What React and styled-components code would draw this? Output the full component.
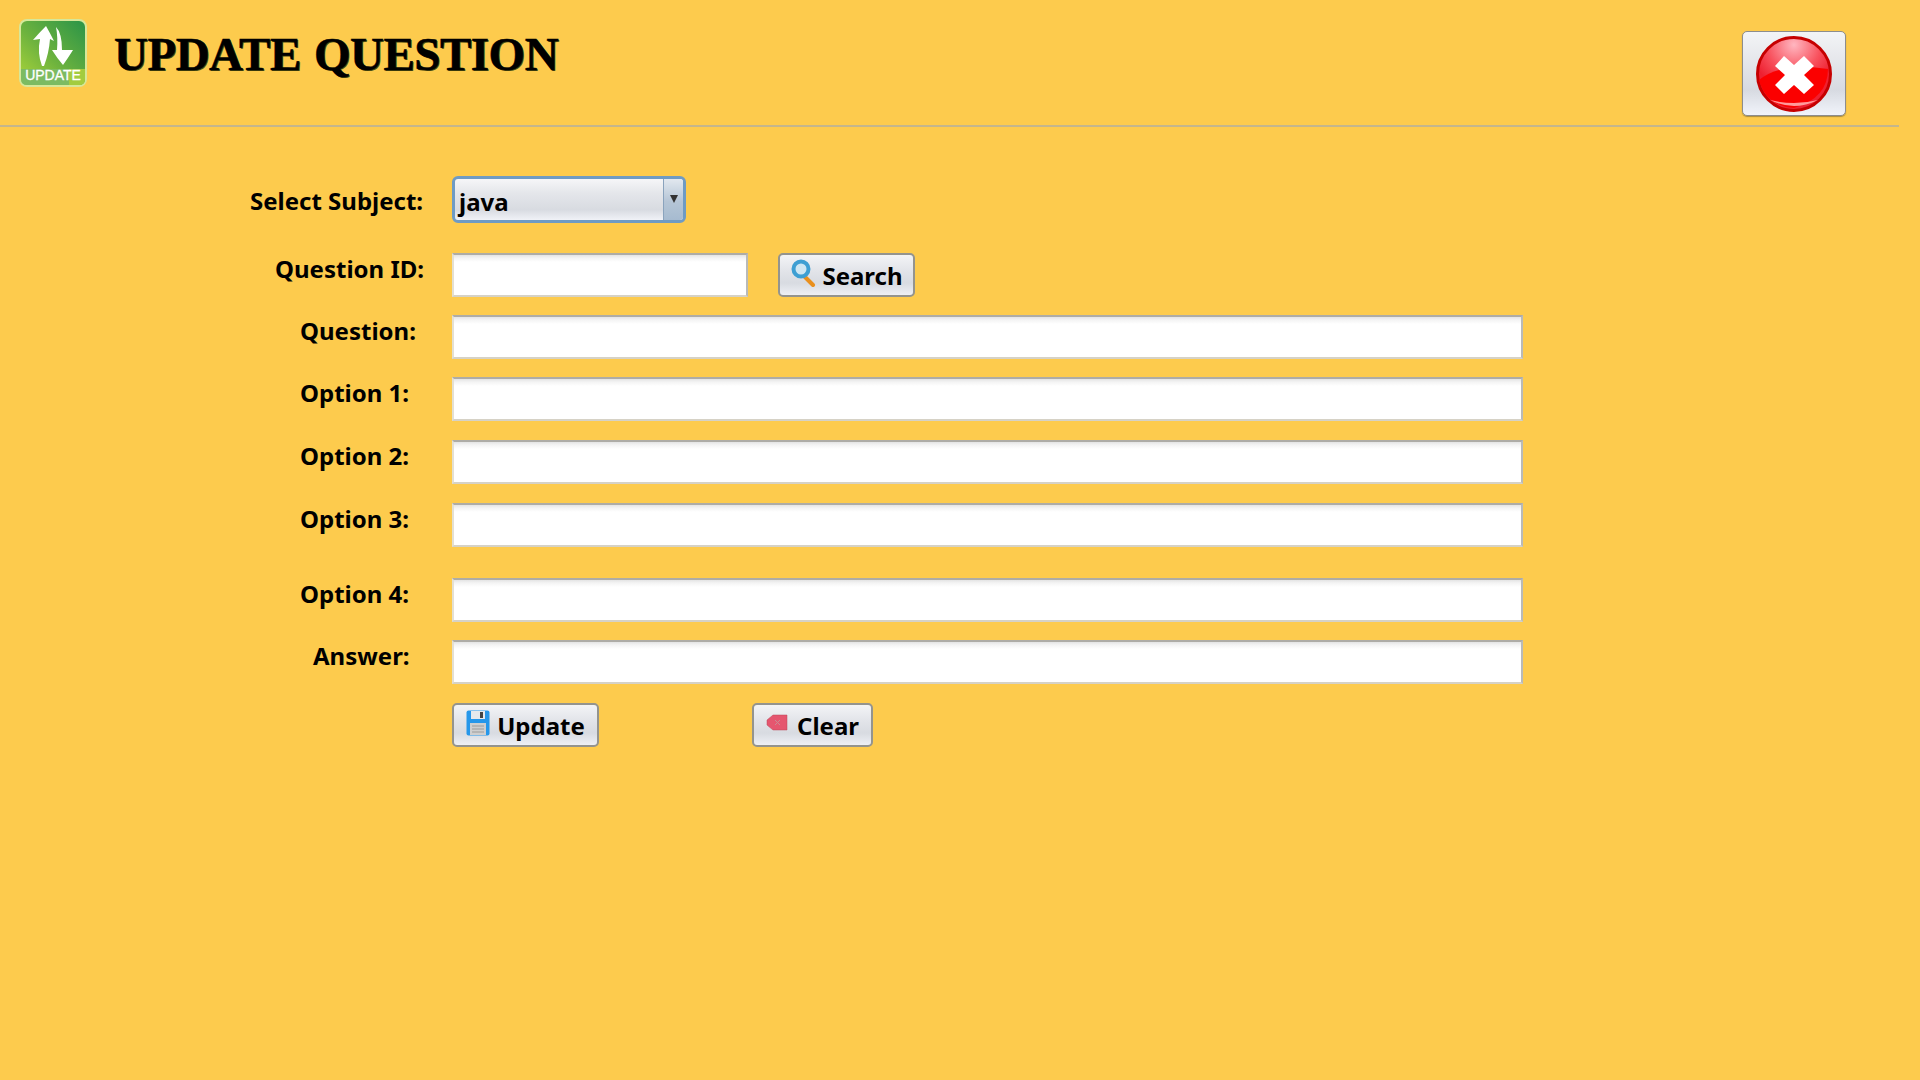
import React from 'react'
import styled, { createGlobalStyle } from 'styled-components'

const GlobalStyle = createGlobalStyle`
  html, body {
    margin: 0;
    height: 100%;
    background: #fdcb4d;
    overflow: hidden;
  }
  * {
    box-sizing: border-box;
  }
`

const Page = styled.div`
  width: 1920px;
  height: 1080px;
  color: #000;
  font-family: "Noto Sans", "Open Sans", sans-serif;
`
const Header = styled.header`
  width: 1899px;
  height: 127px;
  padding: 19px 53px 0 19px;
  display: flex;
  align-items: flex-start;
  border-bottom: 2px solid #c4b68c;
`
const Logo = styled.svg`
  width: 68px;
  height: 68px;
  flex: none;
`
const Title = styled.h1`
  margin: 11px 0 0 27px;
  flex: 1;
  font-family: "Liberation Serif", serif;
  font-size: 47px;
  line-height: 48px;
  font-weight: 700;
  letter-spacing: -0.5px;
  word-spacing: 2px;
  -webkit-text-stroke: 0.5px #000;
  text-shadow: 1px 1px 0 #4a4a10;
`
const CloseButton = styled.button`
  width: 104px;
  height: 85px;
  margin-top: 12px;
  padding: 0;
  display: flex;
  align-items: center;
  justify-content: center;
  border: 1px solid #8d8d8d;
  border-radius: 5px;
  background: linear-gradient(#f3f4f6 0%, #e1e3e8 45%, #d7dae1 70%, #f1f4fb 100%);
  box-shadow: 0 1px 1px rgba(90, 80, 50, 0.5);
`
const Form = styled.main`
  padding-top: 49px;
`
const Row = styled.div`
  display: flex;
  align-items: flex-start;
  height: ${p => p.$height || 44}px;
`
const Label = styled.label`
  width: 452px;
  flex: none;
  padding-left: ${p => p.$left}px;
  padding-top: ${p => p.$top || 0}px;
  font-size: 24px;
  line-height: 32px;
  font-weight: 700;
`
const Field = styled.input`
  width: ${p => p.$width || 1071}px;
  height: 44px;
  padding: 0 6px;
  border: 2px solid #d6d2c6;
  border-top-color: #aeaca6;
  border-left-color: #e4e0d2;
  border-right-color: #b9bab8;
  border-radius: 0;
  background: linear-gradient(#e4e4e4 0, #f4f4f4 3px, #fff 7px);
  outline: none;
`
const Combo = styled.div`
  width: 234px;
  height: 47px;
  display: flex;
  border: 3px solid #6f9bc4;
  border-radius: 6px;
  overflow: hidden;
  background: linear-gradient(#f6f6f8 0%, #e4e6ea 35%, #d8dbe1 75%, #f0f2f7 100%);
`
const ComboValue = styled.span`
  flex: 1;
  padding: 6px 0 0 4px;
  font-size: 24px;
  line-height: 34px;
  font-weight: 700;
`
const ComboArrow = styled.span`
  width: 20px;
  display: flex;
  justify-content: center;
  padding-top: 16px;
  border-left: 1px solid #8aa3bd;
  background: linear-gradient(#e2e8ef 0%, #b5c5d6 55%, #a6bbd0 100%);

  &::after {
    content: '';
    width: 0;
    height: 0;
    border-left: 4px solid transparent;
    border-right: 4px solid transparent;
    border-top: 8px solid #333;
  }
`
const ActionButton = styled.button`
  width: ${p => p.$width}px;
  height: 44px;
  margin-left: ${p => p.$left || 0}px;
  padding: 0;
  display: flex;
  align-items: center;
  justify-content: center;
  gap: ${p => p.$gap || 6}px;
  border: 2px solid #94948e;
  border-radius: 5px;
  background: linear-gradient(#f3f4f6 0%, #e2e4e9 40%, #d8dbe1 70%, #eef0f5 100%);
  font-family: inherit;
  font-size: 24px;
  font-weight: 700;
  color: #000;
`
const Icon = styled.svg`
  flex: none;
  margin-top: -4px;
`

const UpdateLogo = () => (
  <Logo viewBox="0 0 68 68">
    <defs>
      <linearGradient id="logoBg" x1="0" y1="0.9" x2="0.9" y2="0">
        <stop offset="0" stopColor="#a9d33a" />
        <stop offset="0.45" stopColor="#6cb23e" />
        <stop offset="1" stopColor="#2f9647" />
      </linearGradient>
    </defs>
    <rect x="1" y="1" width="66" height="66" rx="7" fill="url(#logoBg)" stroke="#d6e89a" strokeWidth="2" />
    <path d="M2 50 H66 V60 Q66 66 60 66 H8 Q2 66 2 60 Z" fill="#7cbb62" />
    <path d="M50 50 H66 V60 Q66 66 60 66 H50 Z" fill="#a3cc3f" />
    <path d="M27 7 Q31 14 35 22 L31 20 Q30 34 25 47 L23 47 Q18 34 21 20 L14 21 Q20 14 27 7 Z" fill="#fff" />
    <path d="M37 8 Q43 14 43 31 L54 31 Q49 39 44 46 Q38 39 33 31 L38 31 Q39 18 37 8 Z" fill="#fff" />
    <text x="34" y="61" textAnchor="middle" fontFamily="Liberation Sans, sans-serif" fontSize="14" fontWeight="400" stroke="#fff" strokeWidth="0.3" fill="#fff">UPDATE</text>
  </Logo>
)

const CloseIcon = () => (
  <svg width="76" height="76" viewBox="0 0 76 76">
    <defs>
      <radialGradient id="closeGloss" cx="0.5" cy="0.1" r="0.6">
        <stop offset="0" stopColor="#ffb6c0" />
        <stop offset="0.6" stopColor="#f8525e" />
        <stop offset="1" stopColor="#ee2030" />
      </radialGradient>
    </defs>
    <circle cx="38" cy="38" r="36.5" fill="url(#closeGloss)" stroke="#c60000" strokeWidth="3" />
    <path d="M3 44 Q24 26 72 33 Q72 62 38 72 Q10 70 3 44 Z" fill="#fb0000" />
    <path d="M14 64 Q38 76 62 64 Q38 70 14 64 Z" fill="#ff9a9a" />
    <path d="M28 20 L38 29 L48 20 L58 30 L48 39 L58 49 L48 58 L38 49 L28 58 L19 49 L29 39 L19 30 Z" fill="#fff" />
  </svg>
)

const SearchIcon = () => (
  <Icon width="26" height="28" viewBox="0 0 26 28">
    <path d="M15 18 L23 26" stroke="#e98f1d" strokeWidth="4" strokeLinecap="round" />
    <circle cx="11" cy="10" r="7.5" fill="#cfe6f2" stroke="#3e9fd3" strokeWidth="4" />
  </Icon>
)

const SaveIcon = () => (
  <Icon width="24" height="26" viewBox="0 0 24 26">
    <rect x="0.5" y="0.5" width="23" height="25" rx="2" fill="#2697ea" />
    <rect x="5" y="1" width="14" height="8" fill="#e6e9ec" />
    <rect x="14" y="2" width="3" height="6" fill="#444" />
    <rect x="4" y="13" width="16" height="12" fill="#cfcfcf" />
    <path d="M6 16 H18 M6 19 H18 M6 22 H18" stroke="#9b9b9b" strokeWidth="1" />
  </Icon>
)

const TagIcon = () => (
  <Icon width="22" height="18" viewBox="0 0 22 18">
    <path d="M7 1 H21 V16 H7 L1 11 V6 Z" fill="#e5566f" stroke="#b8485a" strokeWidth="0.5" />
    <path d="M9 6 L14 11 M14 6 L9 11" stroke="#c98a92" strokeWidth="1" />
  </Icon>
)

const fields = [
  { label: 'Question:', left: 300, height: 62 },
  { label: 'Option 1:', left: 300, height: 63 },
  { label: 'Option 2:', left: 300, height: 63 },
  { label: 'Option 3:', left: 300, height: 75 },
  { label: 'Option 4:', left: 300, height: 62 },
  { label: 'Answer:', left: 313, height: 63 },
]

const App = () => {
  return (
    <Page>
      <GlobalStyle />
      <Header>
        <UpdateLogo />
        <Title>UPDATE QUESTION</Title>
        <CloseButton aria-label="Close">
          <CloseIcon />
        </CloseButton>
      </Header>
      <Form>
        <Row $height={77}>
          <Label $left={250} $top={9}>Select Subject:</Label>
          <Combo>
            <ComboValue>java</ComboValue>
            <ComboArrow />
          </Combo>
        </Row>
        <Row $height={62}>
          <Label $left={275}>Question ID:</Label>
          <Field $width={296} />
          <ActionButton $width={137} $left={30} $gap={6}>
            <SearchIcon />
            Search
          </ActionButton>
        </Row>
        {fields.map(f => (
          <Row key={f.label} $height={f.height}>
            <Label $left={f.left}>{f.label}</Label>
            <Field />
          </Row>
        ))}
        <Row>
          <Label $left={0} />
          <ActionButton $width={147} $gap={7}>
            <SaveIcon />
            Update
          </ActionButton>
          <ActionButton $width={121} $left={153} $gap={9}>
            <TagIcon />
            Clear
          </ActionButton>
        </Row>
      </Form>
    </Page>
  )
}

export default App
